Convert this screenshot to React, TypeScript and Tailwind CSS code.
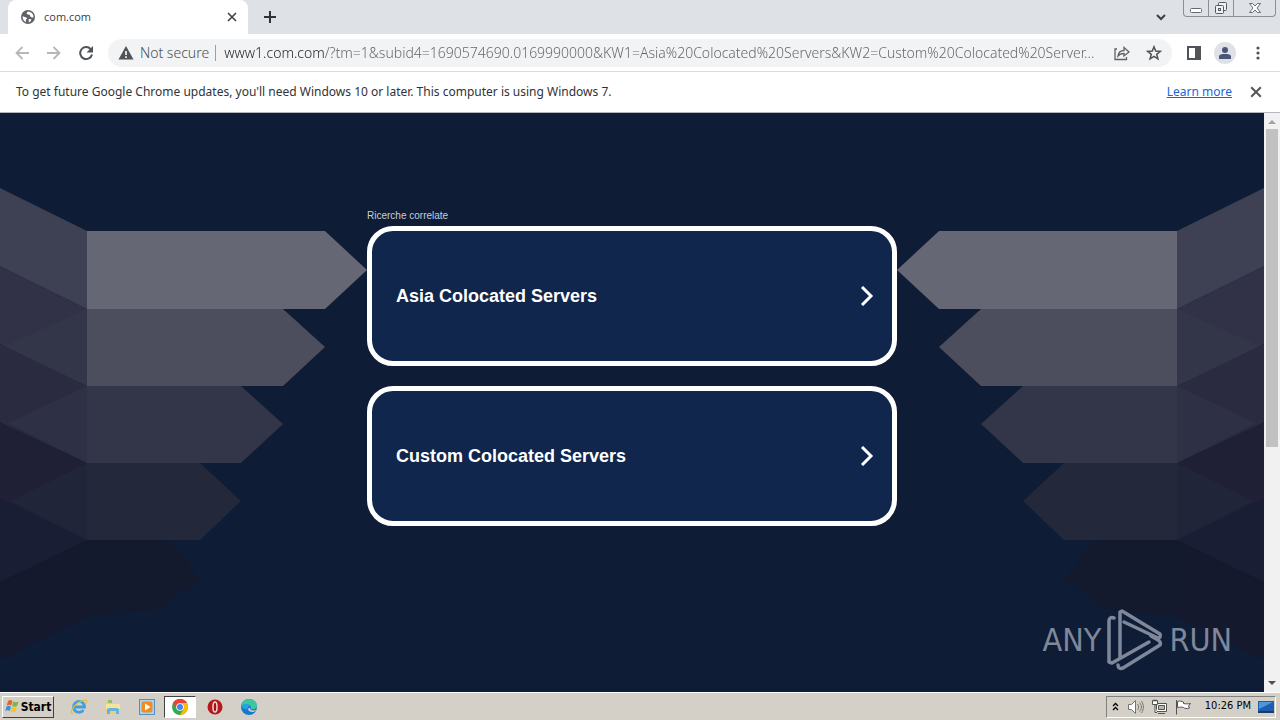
import type { ReactNode } from 'react'

const URL_TEXT =
  'www1.com.com/?tm=1&subid4=1690574690.0169990000&KW1=Asia%20Colocated%20Servers&KW2=Custom%20Colocated%20Server...'

const LINKS = ['Asia Colocated Servers', 'Custom Colocated Servers']

// front arrows, top to bottom
const ARROWS = [
  { points: '87,118 325,118 367,157 325,196 87,196', fill: '#656774' },
  { points: '87,196 283,196 325,234 283,273 87,273', fill: '#4c4e5d' },
  { points: '87,273 241,273 283,311 241,350 87,350', fill: '#333549' },
  { points: '87,350 200,350 241,388 200,427 87,427', fill: '#23283a' },
  { points: '87,427 168,427 200,465 160,496 87,504', fill: '#141a2e' },
]

// folded sides that run off the edge
const SIDES = [
  { points: '0,469 87,427 87,504 0,547', fill: '#14192e' },
  { points: '0,385 87,427 0,469', fill: '#191e35' },
  { points: '0,308 87,350 87,427 0,386', fill: '#1f2036' },
  { points: '10,388 87,350 87,427', fill: '#212539' },
  { points: '0,231 87,273 87,350 0,309', fill: '#2a2b40' },
  { points: '8,310 87,273 87,350', fill: '#2e3045' },
  { points: '0,153 87,196 87,273 0,231', fill: '#313247' },
  { points: '4,233 87,196 87,273', fill: '#333549' },
  { points: '0,75 87,118 87,196 0,153', fill: '#3e4054' },
]

function Arrows({ className }: { className: string }) {
  return (
    <svg className={className} width="368" height="560" aria-hidden="true">
      {[...SIDES, ...ARROWS].map((s) => (
        <polygon key={s.points} points={s.points} fill={s.fill} />
      ))}
    </svg>
  )
}

function IconButton({ label, className = '', children }: { label: string; className?: string; children: ReactNode }) {
  return (
    <button type="button" aria-label={label} className={`flex shrink-0 items-center justify-center ${className}`}>
      {children}
    </button>
  )
}

function Cross({ size, color }: { size: number; color: string }) {
  return (
    <svg width={size} height={size} viewBox="0 0 10 10" stroke={color} strokeWidth="1.6">
      <path d="M1 1l8 8M9 1l-8 8" />
    </svg>
  )
}

function TabStrip() {
  return (
    <header className="flex h-[34px] shrink-0 items-start bg-[#dee1e6]">
      <div className="ml-2 flex h-full w-60 items-center rounded-t-lg bg-white pr-2 pl-3">
        <svg width="16" height="16" viewBox="0 0 16 16">
          <circle cx="8" cy="8" r="7" fill="#5f6368" />
          <path d="M2.6 7.2l3.8 1.2.8 1.4-1.4.8.2 2.6C3.8 12.4 2.4 10 2.6 7.2z" fill="#fff" />
          <path d="M8 2.4l-1.6 1.8 1.2 1.4 2.2.2.4 1.8 1.8 1 1.4 0c.6-3-1.8-6-5.4-6.2z" fill="#fff" />
          <path d="M8.6 10.2l2.8-.2-.6 2-2 1.4z" fill="#fff" />
        </svg>
        <span className="ml-2 flex-1 font-['Open_Sans',sans-serif] text-[11px] text-[#3c4043]">com.com</span>
        <IconButton label="Close tab" className="size-4">
          <Cross size={10} color="#3c4043" />
        </IconButton>
      </div>
      <IconButton label="New tab" className="ml-3.5 h-full w-4">
        <svg width="12" height="12" stroke="#303336" strokeWidth="2">
          <path d="M6 0v12M0 6h12" />
        </svg>
      </IconButton>
      <div className="flex-1" />
      <IconButton label="Search tabs" className="mr-3.5 h-full w-4">
        <svg width="10" height="7" fill="none" stroke="#3c4043" strokeWidth="2">
          <path d="M1 1l4 4 4-4" />
        </svg>
      </IconButton>
      <div className="mr-1 flex h-[17px] overflow-hidden rounded-b border border-t-0 border-[#8b8f97]">
        <IconButton label="Minimize" className="w-6">
          <svg width="12" height="16" fill="#fff" stroke="#666a72">
            <rect x=".5" y="8.5" width="11" height="4" rx="1" />
          </svg>
        </IconButton>
        <IconButton label="Restore" className="w-[26px] border-x border-[#8b8f97]">
          <svg width="14" height="16" fill="#eef0f3" stroke="#555961">
            <rect x="4.5" y="2.5" width="8" height="8" rx="1" />
            <rect x="1.5" y="5.5" width="8" height="8" rx="1" />
            <rect x="4.5" y="8.5" width="2" height="2" />
          </svg>
        </IconButton>
        <IconButton label="Close" className="w-[41px]">
          <svg width="12" height="16" fill="#fff" stroke="#666a72">
            <path d="M.5 3.5h3L6 6l2.5-2.5h3L8 8l3.5 4.5h-3L6 10l-2.5 2.5h-3L4 8z" />
          </svg>
        </IconButton>
      </div>
    </header>
  )
}

function Toolbar() {
  return (
    <nav className="flex h-[38px] shrink-0 items-center border-b border-[#dadce0] bg-white px-3.5">
      <IconButton label="Back" className="size-4">
        <svg width="14" height="14" fill="none" stroke="#b5b7ba" strokeWidth="1.8">
          <path d="M14 7H1.5M7.5 1L1.5 7l6 6" />
        </svg>
      </IconButton>
      <IconButton label="Forward" className="ml-4 size-4">
        <svg width="14" height="14" fill="none" stroke="#b5b7ba" strokeWidth="1.8">
          <path d="M0 7h12.5M6.5 1l6 6-6 6" />
        </svg>
      </IconButton>
      <IconButton label="Reload" className="ml-4 size-4">
        <svg width="16" height="16" fill="none" stroke="#505357" strokeWidth="2">
          <path d="M12.6 4A6 6 0 1 0 14 9.5" />
          <path d="M15 1v6.5H8.5z" fill="#505357" stroke="none" />
        </svg>
      </IconButton>
      <div className="ml-3.5 flex h-7 min-w-0 flex-1 items-center rounded-full bg-[#f1f3f4] px-2.5 font-['Noto_Sans',sans-serif] text-sm font-light">
        <svg className="shrink-0" width="16" height="14">
          <path d="M8 0l7.5 13.5H.5z" fill="#505357" />
          <path d="M7.2 5h1.6v4H7.2zM7.2 10.3h1.6v1.6H7.2z" fill="#fff" />
        </svg>
        <span className="ml-1.5 shrink-0 text-[#4b4f54]">Not secure</span>
        <span className="ml-1.5 h-4 w-px shrink-0 bg-[#9aa0a6]" />
        <input
          aria-label="Address"
          readOnly
          value={URL_TEXT}
          className="ml-2 min-w-0 flex-1 bg-[linear-gradient(to_right,#202124_100px,#5f6368_100px)] bg-clip-text text-transparent outline-none"
        />
        <IconButton label="Share" className="ml-2 size-4">
          <svg width="16" height="16" fill="none" stroke="#5f6368" strokeWidth="1.3">
            <path d="M3 4H1v10.5h11.5V12" />
            <path d="M4 11c.5-4 3-5.5 6-5.5V2.5L15 7l-5 4V8.5C7.5 8.5 5.5 9 4 11z" />
          </svg>
        </IconButton>
        <IconButton label="Bookmark" className="ml-4 size-4">
          <svg width="16" height="16" fill="none" stroke="#505357" strokeWidth="1.5">
            <path d="M8 1.8l1.7 4.3 4.6.3-3.6 2.9 1.2 4.5L8 11.3l-3.9 2.5 1.2-4.5L1.7 6.4l4.6-.3z" />
          </svg>
        </IconButton>
      </div>
      <IconButton label="Side panel" className="ml-3.5 size-4">
        <svg width="14" height="14">
          <path d="M0 0h14v14H0zM2 2v10h6V2z" fill="#505357" fillRule="evenodd" />
        </svg>
      </IconButton>
      <IconButton label="Profile" className="ml-3 size-[22px] rounded-full bg-[#dee1e6]">
        <svg width="12" height="12" fill="#4a5578">
          <circle cx="6" cy="3" r="3" />
          <path d="M0 12V9.5C0 7.5 3 7 6 7s6 .5 6 2.5V12z" />
        </svg>
      </IconButton>
      <IconButton label="Menu" className="ml-3.5 size-4">
        <svg width="4" height="14" fill="#505357">
          <circle cx="2" cy="2" r="1.6" />
          <circle cx="2" cy="7" r="1.6" />
          <circle cx="2" cy="12" r="1.6" />
        </svg>
      </IconButton>
    </nav>
  )
}

function InfoBar() {
  return (
    <div className="flex h-[41px] shrink-0 items-center border-b border-[#b4b8bf] bg-white px-4 font-['Noto_Sans',sans-serif] text-xs text-[#303336]">
      <p className="flex-1">
        To get future Google Chrome updates, you'll need Windows 10 or later. This computer is using Windows 7.
      </p>
      <a href="#" className="text-[#1967d2] underline">Learn more</a>
      <IconButton label="Dismiss" className="ml-4 size-4">
        <Cross size={12} color="#505357" />
      </IconButton>
    </div>
  )
}

function Watermark() {
  return (
    <div className="absolute right-8 bottom-5 flex h-16 items-center gap-1.5 font-['DejaVu_Sans_Condensed',sans-serif] text-[32px] text-[#7f879a]">
      <span>ANY</span>
      <svg width="56" height="62" fill="none" stroke="#7f879a" strokeWidth="3.5" strokeLinejoin="round" strokeLinecap="round">
        <path d="M7 9c-3-1-5 0-5 3v41l3 1 37-21" />
        <path d="M13 48V3l2-1 38 23c1 2 0 4-2 4L17 13" />
        <path d="M11 56c0 3 2 4 5 3l37-23c1-2 0-4-2-5l-7-4" />
      </svg>
      <span>RUN</span>
    </div>
  )
}

function Page() {
  return (
    <div className="flex min-h-0 flex-1">
      <main className="relative min-w-0 flex-1 overflow-hidden bg-[#0f1c35]">
        <Arrows className="absolute top-0 left-0" />
        <Arrows className="absolute top-0 right-0 -scale-x-100" />
        <div className="relative mx-auto mt-24 w-[530px] font-['Liberation_Sans',Arial,sans-serif]">
          <h1 className="h-[17px] text-[10px] leading-[14px] text-[#c9cdd6]">Ricerche correlate</h1>
          <ul className="flex flex-col gap-5">
            {LINKS.map((text) => (
              <li key={text}>
                <a
                  href="#"
                  className="flex h-[140px] items-center justify-between rounded-[26px] border-[5px] border-white bg-[#10264c] pr-[18px] pl-6 text-lg font-bold text-white"
                >
                  {text}
                  <svg width="14" height="20" fill="none" stroke="#fff" strokeWidth="3">
                    <path d="M2 1l9 9-9 9" />
                  </svg>
                </a>
              </li>
            ))}
          </ul>
        </div>
        <Watermark />
      </main>
      <div className="flex w-4 shrink-0 flex-col items-center bg-[#f1f1f1]">
        <svg width="16" height="16" fill="#a3a3a3">
          <path d="M8 7l4 4H4z" />
        </svg>
        <div className="h-[318px] w-3 bg-[#c1c1c1]" />
        <svg className="mt-auto" width="16" height="16" fill="#505050">
          <path d="M4 5h8l-4 4z" />
        </svg>
      </div>
    </div>
  )
}

function Taskbar() {
  return (
    <footer className="flex h-7 shrink-0 items-center border-t border-white bg-[#d4d0c8] pr-1 font-['DejaVu_Sans_Condensed',sans-serif] text-black">
      <button
        type="button"
        className="ml-0.5 flex h-[22px] w-[52px] items-center justify-center border border-t-white border-r-[#404040] border-b-[#404040] border-l-white text-xs font-bold"
      >
        <svg className="shrink-0" width="16" height="15">
          <path d="M3 2c2-1.5 3-1 4.5 0L6.3 6.5C5 5.5 3.5 5.5 1.8 6.5z" fill="#e8622a" />
          <path d="M8.2 2.4c2 1 3.5 1 5.3 0l-1.3 4.5c-1.7 1-3.3 1-5 0z" fill="#7cb83c" />
          <path d="M1.5 7.5c1.7-1 3-1 4.5 0L4.8 12C3.5 11 2 11 .3 12z" fill="#3f8fd6" />
          <path d="M6.8 8c1.8 1 3.4 1 5.2 0l-1.3 4.5c-1.7 1-3.4 1-5 0z" fill="#f5c32c" />
        </svg>
        Start
      </button>
      <IconButton label="Internet Explorer" className="ml-4 h-6 w-[18px]">
        <svg width="18" height="18" fill="none">
          <path d="M13.5 12A5.5 5.5 0 1 1 14.5 9H4" stroke="#3fa0dd" strokeWidth="2.8" />
          <path d="M3 15.5C-1 16 3 8 8.5 4.5 14 1 18.5.5 16 5.5" stroke="#e5bd3c" strokeWidth="1.3" />
        </svg>
      </IconButton>
      <IconButton label="Explorer" className="ml-4 h-6 w-[18px]">
        <svg width="18" height="18">
          <path d="M2 3h5l1 2h7v10H2z" fill="#ecd078" />
          <path d="M4 2h4v3H4z" fill="#8fc26b" />
          <path d="M2 6h14v5H2z" fill="#f5e3a0" />
          <path d="M3 16v-5l2-1h8l2 1v5h-3v-3H6v3z" fill="#65b4dc" />
        </svg>
      </IconButton>
      <IconButton label="Media Player" className="ml-4 h-6 w-[18px]">
        <svg width="16" height="16">
          <rect x=".5" y=".5" width="15" height="15" fill="#a9d3f2" stroke="#4f92c9" />
          <rect x="2.5" y="2.5" width="11" height="11" rx="2" fill="#f28c1c" />
          <path d="M6 4.5v7L11.5 8z" fill="#fff" />
        </svg>
      </IconButton>
      <IconButton
        label="Chrome"
        className="ml-2 h-[22px] w-8 border border-t-[#404040] border-r-white border-b-white border-l-[#404040] bg-white"
      >
        <svg width="16" height="16">
          <circle cx="8" cy="8" r="8" fill="#34a853" />
          <path d="M1.07 4A8 8 0 0 1 14.93 4L8 4.5 5 9.5z" fill="#ea4335" />
          <path d="M14.93 4A8 8 0 0 1 8 16l3.5-6L10 4z" fill="#fbbc04" />
          <circle cx="8" cy="8" r="3.8" fill="#fff" />
          <circle cx="8" cy="8" r="3" fill="#4285f4" />
        </svg>
      </IconButton>
      <IconButton label="Opera" className="ml-2.5 h-6 w-[18px]">
        <svg width="16" height="16">
          <circle cx="8" cy="8" r="7.5" fill="#b5181d" />
          <ellipse cx="8" cy="8" rx="2" ry="5" fill="#a01217" stroke="#f4d9d9" strokeWidth="1.5" />
        </svg>
      </IconButton>
      <IconButton label="Edge" className="ml-4 h-6 w-[18px]">
        <svg width="16" height="16">
          <circle cx="8" cy="8" r="8" fill="#1976d0" />
          <path d="M0 7C.5 3 4 0 8 0c5 0 8 3.5 8 6.5 0 2.5-2 3.8-4 3.8-1.5 0-3-.5-2-2C10 5.5 5 3.5 0 7z" fill="#3cc7a0" />
          <path d="M0 7c3-3 9-3 10 .5-2-1.5-4 .5-3.5 3C3 10 1 8.5 0 7z" fill="#2aa5dc" />
          <path d="M9 8.5c-.5 3 3.5 4 6.5 2-1.5 2.5-4.5 3-6.5 2-2.5-1-2.5-3 0-4z" fill="#d4d0c8" />
        </svg>
      </IconButton>
      <div className="flex-1" />
      <div className="flex h-[22px] items-center border border-t-[#808080] border-r-white border-b-white border-l-[#808080] pl-1">
        <IconButton label="Show hidden icons" className="w-2.5">
          <svg width="7" height="9" fill="none" stroke="#000" strokeWidth="1.3">
            <path d="M1 4l2.5-2.5L6 4M1 8l2.5-2.5L6 8" />
          </svg>
        </IconButton>
        <IconButton label="Volume" className="ml-1.5 w-[18px]">
          <svg width="17" height="16" fill="none" stroke="#77746e">
            <path d="M1.5 5.5h3l4-4v13l-4-4h-3z" fill="#fff" />
            <path d="M10.5 5c1.5 2 1.5 4 0 6M12.5 3.5c2.5 3 2.5 6 0 9M14.5 2c2.5 4 2.5 8 0 12" />
          </svg>
        </IconButton>
        <IconButton label="Network" className="ml-1.5 w-[18px]">
          <svg width="17" height="16" fill="#fff" stroke="#55534f">
            <path d="M5.5 4.5h10v8h-10zM7 14.5h7" />
            <path d="M7.5 6.5h6v4h-6z" fill="#b9b6b0" />
            <path d="M1.5 1.5h5v4h-5zM3 .5v2M5 .5v2M4 5.5v8h2" />
          </svg>
        </IconButton>
        <IconButton label="Action center" className="ml-1.5 w-[18px]">
          <svg width="17" height="16" fill="#fff" stroke="#55534f">
            <path d="M1.5 1v14.5" />
            <path d="M2.5 2.5c3-1 4 0 6 .5v1.5c2 .5 4 .5 7 0l-2 2.5 1 2c-3 1-5 .5-6-.5-2-.5-3-.5-6 0z" />
          </svg>
        </IconButton>
        <time className="ml-3 text-[11px]">10:26 PM</time>
        <IconButton label="Show desktop" className="ml-1.5 w-[18px]">
          <svg width="16" height="14">
            <path d="M0 1h16v10H0z" fill="#1d5fae" />
            <path d="M1 2h14L1 9z" fill="#4d97dc" />
            <path d="M0 11h16v2H0z" fill="#1c3a66" />
          </svg>
        </IconButton>
      </div>
    </footer>
  )
}

export default function App() {
  return (
    <div className="flex h-screen flex-col overflow-hidden">
      <TabStrip />
      <Toolbar />
      <InfoBar />
      <Page />
      <Taskbar />
    </div>
  )
}
